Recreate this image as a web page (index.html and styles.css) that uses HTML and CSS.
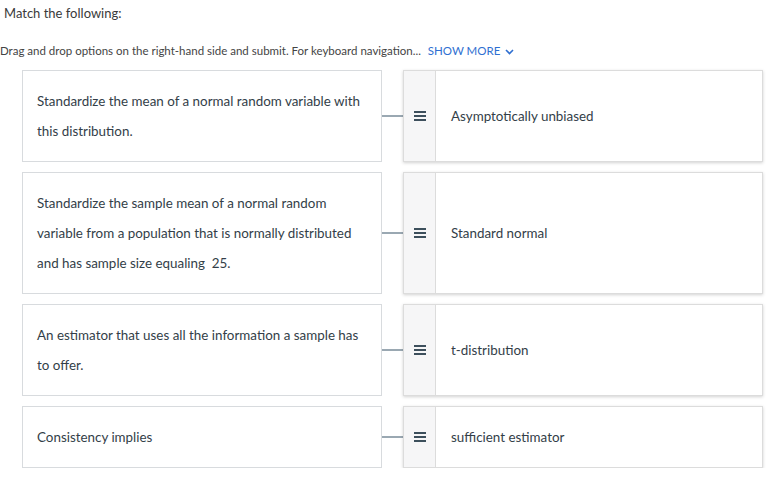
FILE: index.html
```html
<!DOCTYPE html>
<html lang="en">
<head>
    <meta charset="UTF-8">
    <meta name="viewport" content="width=device-width, initial-scale=1.0">
    <title>Match the following</title>
    <link rel="stylesheet" href="styles.css">
</head>
<body>

    <p class="question-title">Match the following:</p>

    <p class="instructions">
        Drag and drop options on the right-hand side and submit. For keyboard navigation...
        <a class="show-more" href="#">SHOW MORE
            <svg width="9" height="6" viewBox="0 0 9 6"><path d="M1 1l3.5 3.5L8 1" fill="none" stroke="currentColor" stroke-width="1.6"/></svg>
        </a>
    </p>

    <div class="match-list">
        <div class="match-row">
            <div class="prompt-box">Standardize the mean of a normal random variable with this distribution.</div>
            <div class="connector"></div>
            <div class="answer-box">
                <div class="drag-handle"><span class="handle-icon"></span></div>
                <div class="answer-text">Asymptotically unbiased</div>
            </div>
        </div>
        <div class="match-row">
            <div class="prompt-box">Standardize the sample mean of a normal random variable from a population that is normally distributed and has sample size equaling&nbsp; 25.</div>
            <div class="connector"></div>
            <div class="answer-box">
                <div class="drag-handle"><span class="handle-icon"></span></div>
                <div class="answer-text">Standard normal</div>
            </div>
        </div>
        <div class="match-row">
            <div class="prompt-box">An estimator that uses all the information a sample has<br>to offer.</div>
            <div class="connector"></div>
            <div class="answer-box">
                <div class="drag-handle"><span class="handle-icon"></span></div>
                <div class="answer-text">t-distribution</div>
            </div>
        </div>
        <div class="match-row">
            <div class="prompt-box">Consistency implies</div>
            <div class="connector"></div>
            <div class="answer-box">
                <div class="drag-handle"><span class="handle-icon"></span></div>
                <div class="answer-text">sufficient estimator</div>
            </div>
        </div>
    </div>

</body>
</html>
```

FILE: styles.css
```css
body {
    font-family: 'Lato', 'Noto Sans', sans-serif;
    margin: 0;
    padding: 0;
    background-color: #ffffff;
    color: #333e48;
}
.question-title {
    margin: 0;
    padding: 5px 0 0 4px;
    font-size: 13px;
    line-height: 16px;
    color: #3a3a3a;
}
.instructions {
    margin: 0;
    padding-top: 23px;
    font-size: 11.5px;
    line-height: 14px;
    color: #444;
}
.show-more {
    color: #2f6fd1;
    text-decoration: none;
    margin-left: 4px;
}
.show-more svg {
    vertical-align: middle;
    margin-left: 2px;
}
.match-list {
    display: flex;
    flex-direction: column;
    gap: 10px;
    padding: 12px 0 0 22px;
}
.match-row {
    display: grid;
    grid-template-columns: 360px 21px 360px;
}
.prompt-box {
    border: 1px solid #d8dbde;
    padding: 15px 14px;
    font-size: 13.4px;
    line-height: 30px;
    color: #333e48;
}
.connector {
    align-self: center;
    height: 2px;
    background-color: #9aa8b2;
}
.answer-box {
    display: flex;
    border: 1px solid #dcdcdc;
    box-shadow: 0 1px 3px rgba(0, 0, 0, 0.18);
    background-color: #ffffff;
}
.drag-handle {
    width: 31px;
    flex-shrink: 0;
    background-color: #f6f6f7;
    border-right: 1px solid #dcdcdc;
    display: flex;
    align-items: center;
    justify-content: center;
}
.handle-icon {
    width: 12px;
    height: 2px;
    background-color: #3d4f5c;
    box-shadow: 0 -4px 0 #3d4f5c, 0 4px 0 #3d4f5c;
}
.answer-text {
    display: flex;
    align-items: center;
    padding-left: 15px;
    font-size: 13.4px;
    color: #333e48;
}
```
